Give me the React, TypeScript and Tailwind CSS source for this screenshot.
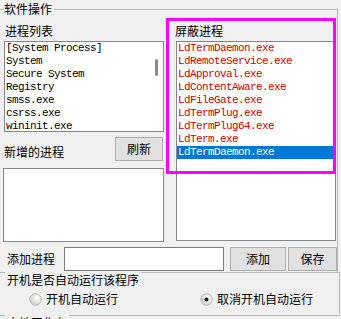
import React from "react";

const procs = [
  "[System Process]",
  "System",
  "Secure System",
  "Registry",
  "smss.exe",
  "csrss.exe",
  "wininit.exe",
];

const blocked = [
  "LdTermDaemon.exe",
  "LdRemoteService.exe",
  "LdApproval.exe",
  "LdContentAware.exe",
  "LdFileGate.exe",
  "LdTermPlug.exe",
  "LdTermPlug64.exe",
  "LdTerm.exe",
];

const mono = "font-['Liberation_Mono',monospace] text-[11px] tracking-[-0.6px] leading-[13px] h-[13px] whitespace-nowrap";

function Radio({ checked }: { checked?: boolean }) {
  return (
    <svg width="13" height="13" viewBox="0 0 13 13" className="shrink-0">
      <defs>
        <radialGradient id={checked ? "rg1" : "rg0"} cx="0.65" cy="0.35" r="0.7">
          <stop offset="0" stopColor="#ffffff" />
          <stop offset="1" stopColor="#c8d2c8" />
        </radialGradient>
      </defs>
      <circle cx="6.5" cy="6.5" r="5.8" fill={`url(#${checked ? "rg1" : "rg0"})`} stroke="#b4b8b4" strokeWidth="1" />
      {checked && <circle cx="6.5" cy="6.5" r="2" fill="#111" />}
    </svg>
  );
}

function Button({ children, className }: { children: React.ReactNode; className: string }) {
  return (
    <div className={`h-[24px] bg-[#e1e1e1] border border-[#adadad] flex items-center justify-center leading-none ${className}`}>
      {children}
    </div>
  );
}

export default function App() {
  return (
    <div className="w-[341px] h-[319px] bg-[#f0f0f0] overflow-hidden relative font-['Noto_Sans_CJK_SC',sans-serif] text-[12px] text-black">
      {/* Group 1 */}
      <div className="w-[338px]">
        <div className="flex items-center h-[14px] mt-[2px]">
          <div className="w-[4px] h-0 border-t border-[#b9b9b9]" />
          <span className="leading-[14px] pr-[2px]">软件操作</span>
          <div className="flex-1 self-end h-[7px] border-t border-r border-[#b9b9b9]" />
        </div>
        <div className="border-r border-[#b9b9b9] h-[256px]">
          <div className="flex pl-[3px]">
            {/* Left column */}
            <div className="w-[161px] flex flex-col">
              <div className="mt-[5px] h-[20px] leading-[20px] ml-[2px]">进程列表</div>
              <div className="ml-[1px] w-[160px] h-[91px] border border-[#828790] bg-white relative overflow-hidden">
                <div className="pl-[1px]">
                  {procs.map((p) => (
                    <div key={p} className={mono}>{p}</div>
                  ))}
                </div>
                <div className="absolute left-[150px] top-[17px] w-[3px] h-[17px] rounded-full bg-[#8a8a8a]" />
              </div>
              <div className="mt-[5px] h-[24px] flex justify-between items-start">
                <div className="mt-[5px] ml-[1px] leading-[20px] h-[20px]">新增的进程</div>
                <Button className="w-[48px] mr-[1px]">刷新</Button>
              </div>
              <div className="mt-[7px] w-[161px] h-[74px] border border-[#828790] bg-white" />
            </div>
            {/* Right column */}
            <div className="ml-[12px] w-[160px] flex flex-col">
              <div className="mt-[5px] h-[20px] leading-[20px] -ml-[1px]">屏蔽进程</div>
              <div className="w-[160px] h-[200px] border border-[#828790] bg-white">
                <div>
                  {blocked.map((p, i) => (
                    <div key={i} className={`${mono} pl-[1px] text-[#d40000]`}>{p}</div>
                  ))}
                  <div className={`${mono} pl-[1px] bg-[#0078d7] text-white`}>LdTermDaemon.exe</div>
                </div>
              </div>
            </div>
          </div>
          {/* Bottom row */}
          <div className="mt-[5px] h-[24px] flex items-center">
            <div className="ml-[7px] w-[48px] leading-[20px]">添加进程</div>
            <div className="ml-[9px] w-[160px] h-[24px] border border-[#7a7a7a] bg-white" />
            <Button className="ml-[6px] w-[56px]">添加</Button>
            <Button className="ml-[2px] w-[49px]">保存</Button>
          </div>
        </div>
      </div>

      {/* Group 2 */}
      <div className="w-[340px] border-r border-[#b9b9b9] h-[42px]">
        <div className="flex items-start h-[16px]">
          <div className="w-[5px] h-0 border-t border-[#b9b9b9]" />
          <span className="leading-[16px] px-[2px]">开机是否自动运行该程序</span>
          <div className="flex-1 h-0 border-t border-[#b9b9b9]" />
        </div>
        <div className="mt-[3px] h-[16px] flex items-center">
          <div className="ml-[29px] flex items-center gap-[4px] w-[170px]">
            <Radio />
            <span className="leading-[16px]">开机自动运行</span>
          </div>
          <div className="ml-[1px] flex items-center gap-[4px]">
            <Radio checked />
            <span className="leading-[16px]">取消开机自动运行</span>
          </div>
        </div>
      </div>

      {/* Group 3 (cut off) */}
      <div className="w-[340px] mt-[1px] flex items-start h-[16px]">
        <div className="w-[5px] h-0 border-t border-[#b9b9b9]" />
        <span className="leading-[16px] px-[2px]">本地工作台</span>
        <div className="flex-1 h-0 border-t border-[#b9b9b9]" />
      </div>

      {/* Magenta highlight annotation */}
      <div className="absolute left-[166px] top-[18px] w-[170px] h-[156px] border-[3px] border-[#ff00ff] pointer-events-none" />
    </div>
  );
}
